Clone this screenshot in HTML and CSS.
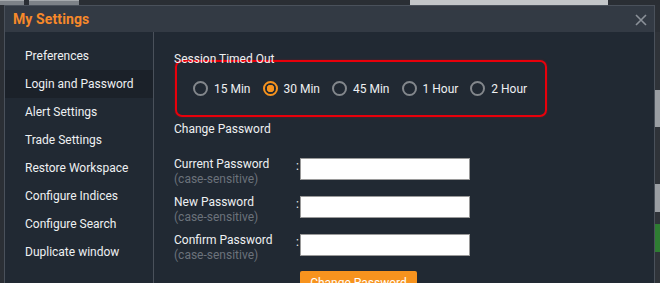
FILE: index.html
```html
<!DOCTYPE html>
<html lang="en">
<head>
    <meta charset="UTF-8">
    <title>My Settings</title>
    <link rel="stylesheet" href="styles.css">
</head>
<body>
    <div class="app-bg">
        <div class="top-strip">
            <span class="tab tab-1"></span>
            <span class="tab tab-2"></span>
            <span class="search-box"></span>
        </div>
        <div class="right-strip">
            <span class="rs rs-1"></span>
            <span class="rs rs-2"></span>
            <span class="rs rs-3"></span>
        </div>
    </div>

    <div class="dialog">
        <div class="dialog-title">
            <h1>My Settings</h1>
            <span class="close-btn">
                <svg width="12" height="12" viewBox="0 0 12 12">
                    <path d="M1 1 L11 11 M11 1 L1 11" stroke="#8b9199" stroke-width="1.6" fill="none"/>
                </svg>
            </span>
        </div>
        <div class="dialog-body">
            <ul class="side-menu">
                <li>Preferences</li>
                <li class="active">Login and Password</li>
                <li>Alert Settings</li>
                <li>Trade Settings</li>
                <li>Restore Workspace</li>
                <li>Configure Indices</li>
                <li>Configure Search</li>
                <li>Duplicate window</li>
            </ul>
            <div class="panel">
                <div class="section-title">Session Timed Out</div>
                <div class="timeout-box">
                    <label class="radio"><span class="dot"></span>15 Min</label>
                    <label class="radio checked"><span class="dot"></span>30 Min</label>
                    <label class="radio"><span class="dot"></span>45 Min</label>
                    <label class="radio"><span class="dot"></span>1 Hour</label>
                    <label class="radio"><span class="dot"></span>2 Hour</label>
                </div>
                <div class="section-title change-title">Change Password</div>
                <div class="form-row">
                    <div class="label">Current Password<span>(case-sensitive)</span></div>
                    <div class="colon">:</div>
                    <input type="password" class="field">
                </div>
                <div class="form-row">
                    <div class="label">New Password<span>(case-sensitive)</span></div>
                    <div class="colon">:</div>
                    <input type="password" class="field">
                </div>
                <div class="form-row">
                    <div class="label">Confirm Password<span>(case-sensitive)</span></div>
                    <div class="colon">:</div>
                    <input type="password" class="field">
                </div>
                <div class="btn-row">
                    <button class="btn-change">Change Password</button>
                </div>
            </div>
        </div>
    </div>
</body>
</html>
```

FILE: styles.css
```css
body {
    margin: 0;
    padding: 0;
    width: 660px;
    height: 283px;
    overflow: hidden;
    background-color: #2b2f35;
    font-family: Roboto, "Liberation Sans", sans-serif;
    font-size: 12px;
    color: #eef0f2;
}
.app-bg {
    position: absolute;
    inset: 0;
}
.top-strip {
    height: 5px;
    display: flex;
    background-color: #2a2e34;
}
.tab {
    display: block;
    height: 5px;
    background-color: #7d8288;
    border-top: 1px solid #a6aaae;
    box-sizing: border-box;
}
.tab-1 { width: 24px; }
.tab-2 { width: 50px; margin-left: 5px; }
.search-box {
    display: block;
    width: 198px;
    height: 5px;
    margin-left: 331px;
    background-color: #c3c6c9;
}
.right-strip {
    position: absolute;
    right: 0;
    top: 32px;
    width: 5px;
    bottom: 0;
    background-color: #2f3339;
}
.rs {
    position: absolute;
    left: 0;
    width: 5px;
}
.rs-1 { top: 58px; height: 37px; background-color: #9a9ea3; }
.rs-2 { top: 152px; height: 28px; background-color: #9a9ea3; }
.rs-3 { top: 192px; height: 28px; background-color: #2e7d32; }

.dialog {
    position: absolute;
    left: 4px;
    top: 5px;
    width: 651px;
    height: 290px;
    background-color: #212933;
    border: 1px solid #4a515b;
    border-bottom: none;
    box-sizing: border-box;
}
.dialog-title {
    height: 26px;
    background-color: #333a44;
    display: flex;
    align-items: center;
    justify-content: space-between;
    padding: 0 7px 0 8px;
}
.dialog-title h1 {
    margin: 0;
    font-size: 14px;
    font-weight: bold;
    color: #f7892a;
    letter-spacing: 0.1px;
}
.close-btn {
    display: flex;
    margin-top: 1px;
}
.dialog-body {
    display: flex;
    height: 264px;
}
.side-menu {
    list-style: none;
    margin: 0;
    padding: 10px 0 0 0;
    width: 148px;
    border-right: 1px solid #4a515b;
}
.side-menu li {
    height: 28px;
    line-height: 28px;
    padding-left: 20px;
    color: #eef0f2;
}
.side-menu li.active {
    background-color: #1b2129;
}
.panel {
    padding: 20px 0 0 20px;
    flex: 1;
}
.section-title {
    line-height: 15px;
    height: 8px;
    position: relative;
    z-index: 1;
}
.timeout-box {
    box-sizing: border-box;
    width: 372px;
    height: 57px;
    margin-left: 1px;
    border: 2px solid #e8000b;
    border-radius: 7px;
    display: flex;
    align-items: center;
    padding-left: 16px;
    gap: 12px;
    box-shadow: 0 0 2px rgba(232, 0, 11, 0.4);
}
.radio {
    display: flex;
    align-items: center;
    gap: 6px;
    color: #eef0f2;
}
.radio .dot {
    width: 11px;
    height: 11px;
    border: 2px solid #83878c;
    border-radius: 50%;
    display: inline-block;
}
.radio.checked .dot {
    border-color: #f7931e;
    background: radial-gradient(circle, #f7931e 0 3.5px, transparent 4px);
}
.change-title {
    margin-top: 5px;
    height: 35px;
    line-height: 15px;
}
.form-row {
    display: flex;
    align-items: flex-start;
    height: 38px;
}
.label {
    width: 122px;
    line-height: 15px;
}
.label span {
    display: block;
    color: #6b727b;
}
.colon {
    width: 4px;
    line-height: 15px;
    padding-top: 2px;
}
.field {
    width: 170px;
    height: 22px;
    margin: 1px 0 0 0;
    box-sizing: border-box;
    border: 1px solid #9a9a9a;
    background-color: #fff;
    padding: 0 4px;
}
.btn-row {
    padding-left: 126px;
}
.btn-change {
    width: 117px;
    height: 24px;
    background-color: #f7931e;
    border: none;
    border-radius: 2px;
    color: #fff;
    font-family: Roboto, "Liberation Sans", sans-serif;
    font-size: 12px;
}
```
